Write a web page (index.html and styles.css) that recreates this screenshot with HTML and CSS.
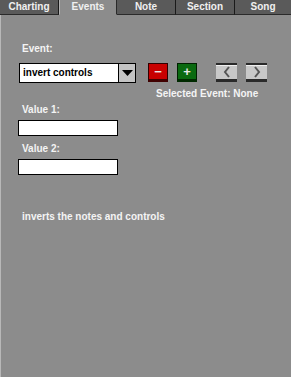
FILE: index.html
```html
<!DOCTYPE html>
<html>
<head>
<meta charset="utf-8">
<link rel="stylesheet" href="styles.css">
</head>
<body>
<div class="tabs">
  <div class="tab">Charting</div>
  <div class="tab active">Events</div>
  <div class="tab">Note</div>
  <div class="tab">Section</div>
  <div class="tab last">Song</div>
</div>
<div class="panel">
  <div class="label event-label">Event:</div>
  <div class="event-row">
    <div class="select">
      <span class="select-text">invert controls</span>
      <span class="select-arrow"><svg width="11" height="7" viewBox="0 0 11 7"><polygon points="0,0 11,0 5.5,6" fill="#000"/></svg></span>
    </div>
    <div class="btn red"><span class="sym">−</span></div>
    <div class="btn green"><span class="sym">+</span></div>
    <div class="btn grey nav-left"><svg width="8" height="12" viewBox="0 0 8 12"><polyline points="6,1 2,6 6,11" fill="none" stroke="#555" stroke-width="2"/></svg></div>
    <div class="btn grey"><svg width="8" height="12" viewBox="0 0 8 12"><polyline points="2,1 6,6 2,11" fill="none" stroke="#555" stroke-width="2"/></svg></div>
  </div>
  <div class="label selected">Selected Event: None</div>
  <div class="label value-label">Value 1:</div>
  <div class="input"></div>
  <div class="label value-label2">Value 2:</div>
  <div class="input"></div>
  <div class="label desc">inverts the notes and controls</div>
</div>
</body>
</html>
```
FILE: styles.css
```css
html, body {
  margin: 0;
  padding: 0;
  background: #8c8c8c;
  height: 100%;
}
body {
  font-family: "Liberation Sans", Arial, sans-serif;
  font-weight: bold;
  font-size: 10px;
  color: #f4f4f4;
  display: flex;
  flex-direction: column;
}
.tabs {
  display: flex;
  height: 15px;
}
.tab {
  width: 58px;
  height: 14px;
  line-height: 13px;
  text-align: center;
  background: #5a5a5a;
  border-right: 1px solid #1a1a1a;
  border-bottom: 1px solid #2a2a2a;
  color: #f0f0f0;
}
.tab.active {
  background: #8c8c8c;
  border-bottom: 1px solid #8c8c8c;
  border-right: 1px solid #2a2a2a;
  border-left: 1px solid #b4b4b4;
  width: 56px;
}
.tab.last {
  flex: 1;
  border-right: none;
}
.panel {
  flex: 1;
  border-left: 1px solid #b8b8b8;
  padding-left: 18px;
  display: flex;
  flex-direction: column;
  align-items: flex-start;
}
.label {
  line-height: 11px;
  height: 11px;
}
.event-label {
  margin-top: 28px;
  margin-left: 3px;
}
.event-row {
  display: flex;
  align-items: flex-start;
  margin-top: 9px;
}
.select {
  width: 115px;
  height: 18px;
  border: 1px solid #000;
  background: #fff;
  display: flex;
  color: #000;
}
.select-text {
  flex: 1;
  padding-left: 3px;
  line-height: 18px;
}
.select-arrow {
  width: 16px;
  border-left: 1px solid #000;
  background: #c4c4c4;
  display: flex;
  align-items: center;
  justify-content: center;
}
.btn {
  width: 20px;
  height: 19px;
  box-sizing: border-box;
  display: flex;
  align-items: center;
  justify-content: center;
}
.red {
  margin-left: 12px;
  background: #c80000;
  border: 1px solid #300000;
  border-bottom: 3px solid #400000;
}
.green {
  margin-left: 9px;
  background: #0a6a10;
  border: 1px solid #002000;
  border-bottom: 3px solid #002a00;
}
.sym {
  color: #e8e8e8;
  font-size: 13px;
  line-height: 13px;
}
.grey {
  width: 21px;
  margin-left: 9px;
  background: #c8c8c8;
  border-top: 2px solid #2a2a2a;
  border-bottom: 3px solid #2a2a2a;
  box-shadow: inset 0 1px 0 #eeeeee;
}
.nav-left {
  margin-left: 19px;
}
.selected {
  margin-top: 5px;
  margin-left: 137px;
}
.value-label {
  margin-top: 5px;
  margin-left: 3px;
}
.value-label2 {
  margin-top: 7px;
  margin-left: 3px;
}
.input {
  width: 98px;
  height: 14px;
  border: 1px solid #000;
  background: #fff;
  margin-top: 5px;
  margin-left: -1px;
}
.desc {
  margin-top: 36px;
  margin-left: 3px;
}
```
